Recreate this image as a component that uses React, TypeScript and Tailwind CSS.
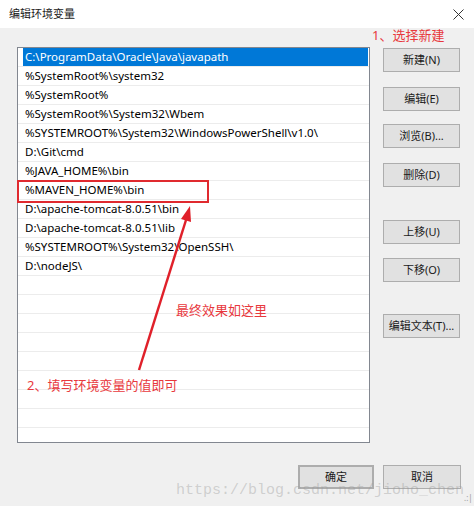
const paths = [
  "C:\\ProgramData\\Oracle\\Java\\javapath",
  "%SystemRoot%\\system32",
  "%SystemRoot%",
  "%SystemRoot%\\System32\\Wbem",
  "%SYSTEMROOT%\\System32\\WindowsPowerShell\\v1.0\\",
  "D:\\Git\\cmd",
  "%JAVA_HOME%\\bin",
  "%MAVEN_HOME%\\bin",
  "D:\\apache-tomcat-8.0.51\\bin",
  "D:\\apache-tomcat-8.0.51\\lib",
  "%SYSTEMROOT%\\System32\\OpenSSH\\",
  "D:\\nodeJS\\",
];

const rows = [...paths, ...Array(10).fill("")];

function WinButton({ label, className = "" }: { label: string; className?: string }) {
  return (
    <button
      className={`h-[24px] bg-[#e1e1e1] border border-[#adadad] text-[11px] text-[#1a1a1a] flex items-center justify-center ${className}`}
    >
      {label}
    </button>
  );
}

export default function App() {
  return (
    <div
      className="relative w-[474px] h-[506px] overflow-hidden bg-[#f0f0f0] text-black"
      style={{ fontFamily: '"Noto Sans", "Noto Sans CJK SC", sans-serif' }}
    >
      {/* title bar */}
      <div className="h-[28px] bg-white flex items-center justify-between pl-[9px] pr-[9px]">
        <span className="text-[11px] text-[#222]">编辑环境变量</span>
        <svg width="11" height="11" viewBox="0 0 11 11" className="mr-[1px]">
          <path d="M0.5 0.5L10.5 10.5M10.5 0.5L0.5 10.5" stroke="#333" strokeWidth="1" />
        </svg>
      </div>

      <div className="flex pt-[19px] pl-[17px] gap-[13px]">
        {/* list */}
        <div className="w-[353px] h-[396px] bg-white border border-[#828790] overflow-hidden">
          {rows.map((p, i) => (
            <div key={i} className="h-[19px] border-b border-[#ececec] flex">
              {i === 0 ? (
                <div className="ml-[5px] mr-px flex-1 bg-[#0078d7] text-white pl-[2px] text-[11.5px] leading-[18px]">
                  {p}
                </div>
              ) : (
                <div className="pl-[7px] text-[11.5px] leading-[18px] whitespace-nowrap">{p}</div>
              )}
            </div>
          ))}
        </div>

        {/* buttons */}
        <div className="w-[77px] pt-px flex flex-col">
          <WinButton label="新建(N)" />
          <WinButton label="编辑(E)" className="mt-[15px]" />
          <WinButton label="浏览(B)..." className="mt-[13px]" />
          <WinButton label="删除(D)" className="mt-[15px]" />
          <WinButton label="上移(U)" className="mt-[33px]" />
          <WinButton label="下移(O)" className="mt-[14px]" />
          <WinButton label="编辑文本(T)..." className="mt-[32px]" />
        </div>
      </div>

      {/* bottom buttons */}
      <div className="flex justify-end gap-[9px] pr-[13px] mt-[22px]">
        <WinButton label="确定" className="w-[76px] border-2 border-[#0078d7]" />
        <WinButton label="取消" className="w-[78px]" />
      </div>

      {/* annotations */}
      <span className="absolute left-[372px] top-[26px] text-[13px] text-[#e8383d] leading-[18px]">
        1、选择新建
      </span>
      <div className="absolute left-[17px] top-[180px] w-[192px] h-[23px] border-2 border-[#e02a2f]" />
      <span className="absolute left-[176px] top-[301px] text-[13px] text-[#e8383d] leading-[18px]">
        最终效果如这里
      </span>
      <span className="absolute left-[27px] top-[376px] text-[13px] text-[#e8383d] leading-[18px]">
        2、填写环境变量的值即可
      </span>
      <svg className="absolute left-0 top-0 pointer-events-none" width="474" height="506">
        <line x1="139" y1="370" x2="186" y2="220" stroke="#e0202a" strokeWidth="2.5" />
        <polygon points="190,206 191,222 181,219" fill="#e0202a" />
      </svg>

      {/* watermark */}
      <span
        className="absolute left-[176px] top-[480px] text-[15px] text-[#9a9a9a]/40 whitespace-nowrap"
        style={{ fontFamily: '"Liberation Mono", monospace' }}
      >
        https://blog.csdn.net/jioho_chen
      </span>
      <span className="absolute left-[464px] top-[494px] text-[8px] text-[#999] leading-none">.:|</span>
    </div>
  );
}
